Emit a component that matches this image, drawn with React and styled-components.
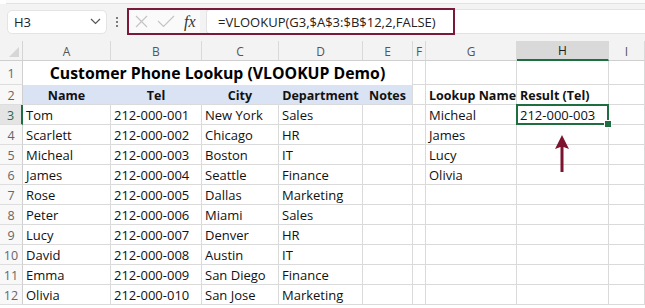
import React from 'react'
import styled, { createGlobalStyle } from 'styled-components'

const GlobalStyle = createGlobalStyle`
    html, body {
        margin: 0;
        padding: 0;
        background: #ffffff;
        overflow: hidden;
    }
    * {
        box-sizing: border-box;
    }
`;

const COLS = ['A', 'B', 'C', 'D', 'E', 'F', 'G', 'H', 'I']
const WIDTHS = '23px 88px 91px 77px 84px 50px 13px 91px 92px 1fr'

const people = [
    ['Tom', '212-000-001', 'New York', 'Sales'],
    ['Scarlett', '212-000-002', 'Chicago', 'HR'],
    ['Micheal', '212-000-003', 'Boston', 'IT'],
    ['James', '212-000-004', 'Seattle', 'Finance'],
    ['Rose', '212-000-005', 'Dallas', 'Marketing'],
    ['Peter', '212-000-006', 'Miami', 'Sales'],
    ['Lucy', '212-000-007', 'Denver', 'HR'],
    ['David', '212-000-008', 'Austin', 'IT'],
    ['Emma', '212-000-009', 'San Diego', 'Finance'],
    ['Olivia', '212-000-010', 'San Jose', 'Marketing'],
]

// lookup names sit in G3:G6
const lookups = ['Micheal', 'James', 'Lucy', 'Olivia']

function App() {
    return (
        <Page>
            <GlobalStyle />
            <TopStrip />
            <FormulaBar>
                <NameBox>
                    <span>H3</span>
                    <svg width="11" height="7" viewBox="0 0 11 7">
                        <path d="M1 1 L5.5 5.5 L10 1" fill="none" stroke="#555" strokeWidth="1.2" />
                    </svg>
                </NameBox>
                <Dots>
                    <i /><i /><i />
                </Dots>
                <FxGroup>
                    <svg width="13" height="13" viewBox="0 0 13 13">
                        <path d="M1 1 L12 12 M12 1 L1 12" stroke="#c4c4c4" strokeWidth="1.2" />
                    </svg>
                    <svg width="18" height="13" viewBox="0 0 18 13">
                        <path d="M1 6 L6.5 11.5 L17 1" fill="none" stroke="#c4c4c4" strokeWidth="1.2" />
                    </svg>
                    <FxLabel>fx</FxLabel>
                </FxGroup>
                <FormulaInput>=VLOOKUP(G3,$A$3:$B$12,2,FALSE)</FormulaInput>
                <Highlight />
            </FormulaBar>

            <Sheet>
                <Corner>
                    <svg width="10" height="10" viewBox="0 0 10 10">
                        <path d="M10 0 L10 10 L0 10 Z" fill="#d6d6d6" />
                    </svg>
                </Corner>
                {COLS.map(c => (
                    <ColHead key={c} $selected={c === 'H'}>{c}</ColHead>
                ))}

                <RowHead>1</RowHead>
                <TitleCell>Customer Phone Lookup (VLOOKUP Demo)</TitleCell>
                <Cell /><Cell /><Cell /><Cell />

                <RowHead>2</RowHead>
                {['Name', 'Tel', 'City', 'Department', 'Notes'].map((h, i) => (
                    <Cell key={h} $bold $center $fill $lastFill={i === 4}>{h}</Cell>
                ))}
                <Cell />
                <Cell $bold>Lookup Name</Cell>
                <Cell $bold>Result (Tel)</Cell>
                <Cell />

                {people.map((p, i) => {
                    const row = i + 3
                    return (
                        <React.Fragment key={row}>
                            <RowHead $selected={row === 3}>{row}</RowHead>
                            {p.map((v, j) => <Cell key={j}>{v}</Cell>)}
                            <Cell />
                            <Cell />
                            <Cell>{lookups[i] || ''}</Cell>
                            <Cell $active={row === 3}>{row === 3 ? '212-000-003' : ''}</Cell>
                            <Cell />
                        </React.Fragment>
                    )
                })}

                <Arrow width="14" height="37" viewBox="0 0 14 37">
                    <path d="M7 0 L14 14 L8.5 12 L8.5 37 L5.5 37 L5.5 12 L0 14 Z" fill="#7c1430" />
                </Arrow>
            </Sheet>
        </Page>
    )
}

const Page = styled.div`
    width: 645px;
    height: 308px;
    overflow: hidden;
    background: #ffffff;
`;

const TopStrip = styled.div`
    height: 4px;
    background: #fbfbfb;
    border-bottom: 1px solid #e2e2e2;
    margin-left: 6px;
`;

const FormulaBar = styled.div`
    position: relative;
    height: 37px;
    background: #f3f3f3;
    display: flex;
    align-items: center;
    padding: 0 0 2px 7px;
    font-family: 'Open Sans', 'Noto Sans', sans-serif;
`;

const NameBox = styled.div`
    width: 100px;
    height: 24px;
    background: #ffffff;
    border: 1px solid #e4e4e4;
    border-radius: 5px;
    display: flex;
    align-items: center;
    justify-content: space-between;
    padding: 0 5px 0 6px;
    font-size: 13px;
    color: #222;
`;

const Dots = styled.div`
    width: 20px;
    display: flex;
    flex-direction: column;
    align-items: center;
    gap: 2px;
    i {
        width: 2px;
        height: 2px;
        border-radius: 50%;
        background: #555;
    }
`;

const FxGroup = styled.div`
    width: 71px;
    height: 24px;
    margin-left: 2px;
    background: #fafafa;
    display: flex;
    align-items: center;
    gap: 9px;
    padding-left: 6px;
`;

const FxLabel = styled.span`
    font-family: 'Liberation Serif', 'DejaVu Serif', serif;
    font-style: italic;
    font-size: 16px;
    color: #333;
`;

const FormulaInput = styled.div`
    flex: 1;
    height: 25px;
    margin-left: 6px;
    background: #ffffff;
    border: 1px solid #e2e2e2;
    border-right: none;
    border-radius: 4px 0 0 4px;
    display: flex;
    align-items: center;
    padding-left: 11px;
    font-size: 13px;
    color: #222;
`;

const Highlight = styled.div`
    position: absolute;
    left: 127px;
    top: 4px;
    width: 328px;
    height: 27px;
    border: 2px solid #7a1a3b;
    pointer-events: none;
`;

const Sheet = styled.div`
    position: relative;
    display: grid;
    grid-template-columns: ${WIDTHS};
    grid-template-rows: 20px 24px repeat(11, 20px);
    font-family: 'Open Sans', 'Noto Sans', sans-serif;
`;

const Corner = styled.div`
    background: #f3f3f3;
    border-right: 1px solid #d4d4d4;
    border-bottom: 1px solid #cfcfcf;
    display: flex;
    align-items: flex-end;
    justify-content: flex-end;
    padding: 0 3px 3px 0;
`;

const ColHead = styled.div`
    background: ${props => props.$selected ? '#d9d9d9' : '#f3f3f3'};
    border-right: 1px solid #d9d9d9;
    border-bottom: ${props => props.$selected ? '2px solid #1e6e42' : '1px solid #cfcfcf'};
    color: ${props => props.$selected ? '#1b1b1b' : '#555'};
    font-size: 12px;
    display: flex;
    align-items: center;
    justify-content: center;
    padding-top: 1px;
`;

const RowHead = styled.div`
    background: ${props => props.$selected ? '#e4e4e4' : '#f8f8f8'};
    border-right: ${props => props.$selected ? '2px solid #1e6e42' : '1px solid #cfcfcf'};
    border-bottom: 1px solid #dedede;
    color: ${props => props.$selected ? '#1e6e42' : '#666'};
    font-size: 12.5px;
    display: flex;
    align-items: center;
    justify-content: center;
    padding-top: 1px;
`;

const Cell = styled.div`
    position: relative;
    background: ${props => props.$fill ? '#dae3f3' : '#ffffff'};
    border-right: 1px solid ${props => props.$fill && !props.$lastFill ? '#dae3f3' : '#dadada'};
    border-bottom: 1px solid #dadada;
    font-size: ${props => props.$bold ? '12.5px' : '13px'};
    font-weight: ${props => props.$bold ? 700 : 400};
    color: #111;
    line-height: 19px;
    padding: 1px 3px 0;
    white-space: nowrap;
    text-align: ${props => props.$center ? 'center' : 'left'};
    ${props => props.$active && `
        z-index: 1;
        &::after {
            content: '';
            position: absolute;
            left: -1px;
            top: -1px;
            right: -1px;
            bottom: -1px;
            border: 2px solid #1e6e42;
        }
        &::before {
            content: '';
            position: absolute;
            right: -4px;
            bottom: -4px;
            width: 6px;
            height: 6px;
            background: #1e6e42;
            border: 1px solid #ffffff;
            z-index: 2;
        }
    `}
`;

const TitleCell = styled.div`
    grid-column: span 5;
    border-right: 1px solid #dadada;
    font-size: 15.8px;
    font-weight: 700;
    color: #000;
    text-align: center;
    line-height: 24px;
    white-space: nowrap;
`;

const Arrow = styled.svg`
    position: absolute;
    left: 555px;
    top: 94px;
`;

export default App
